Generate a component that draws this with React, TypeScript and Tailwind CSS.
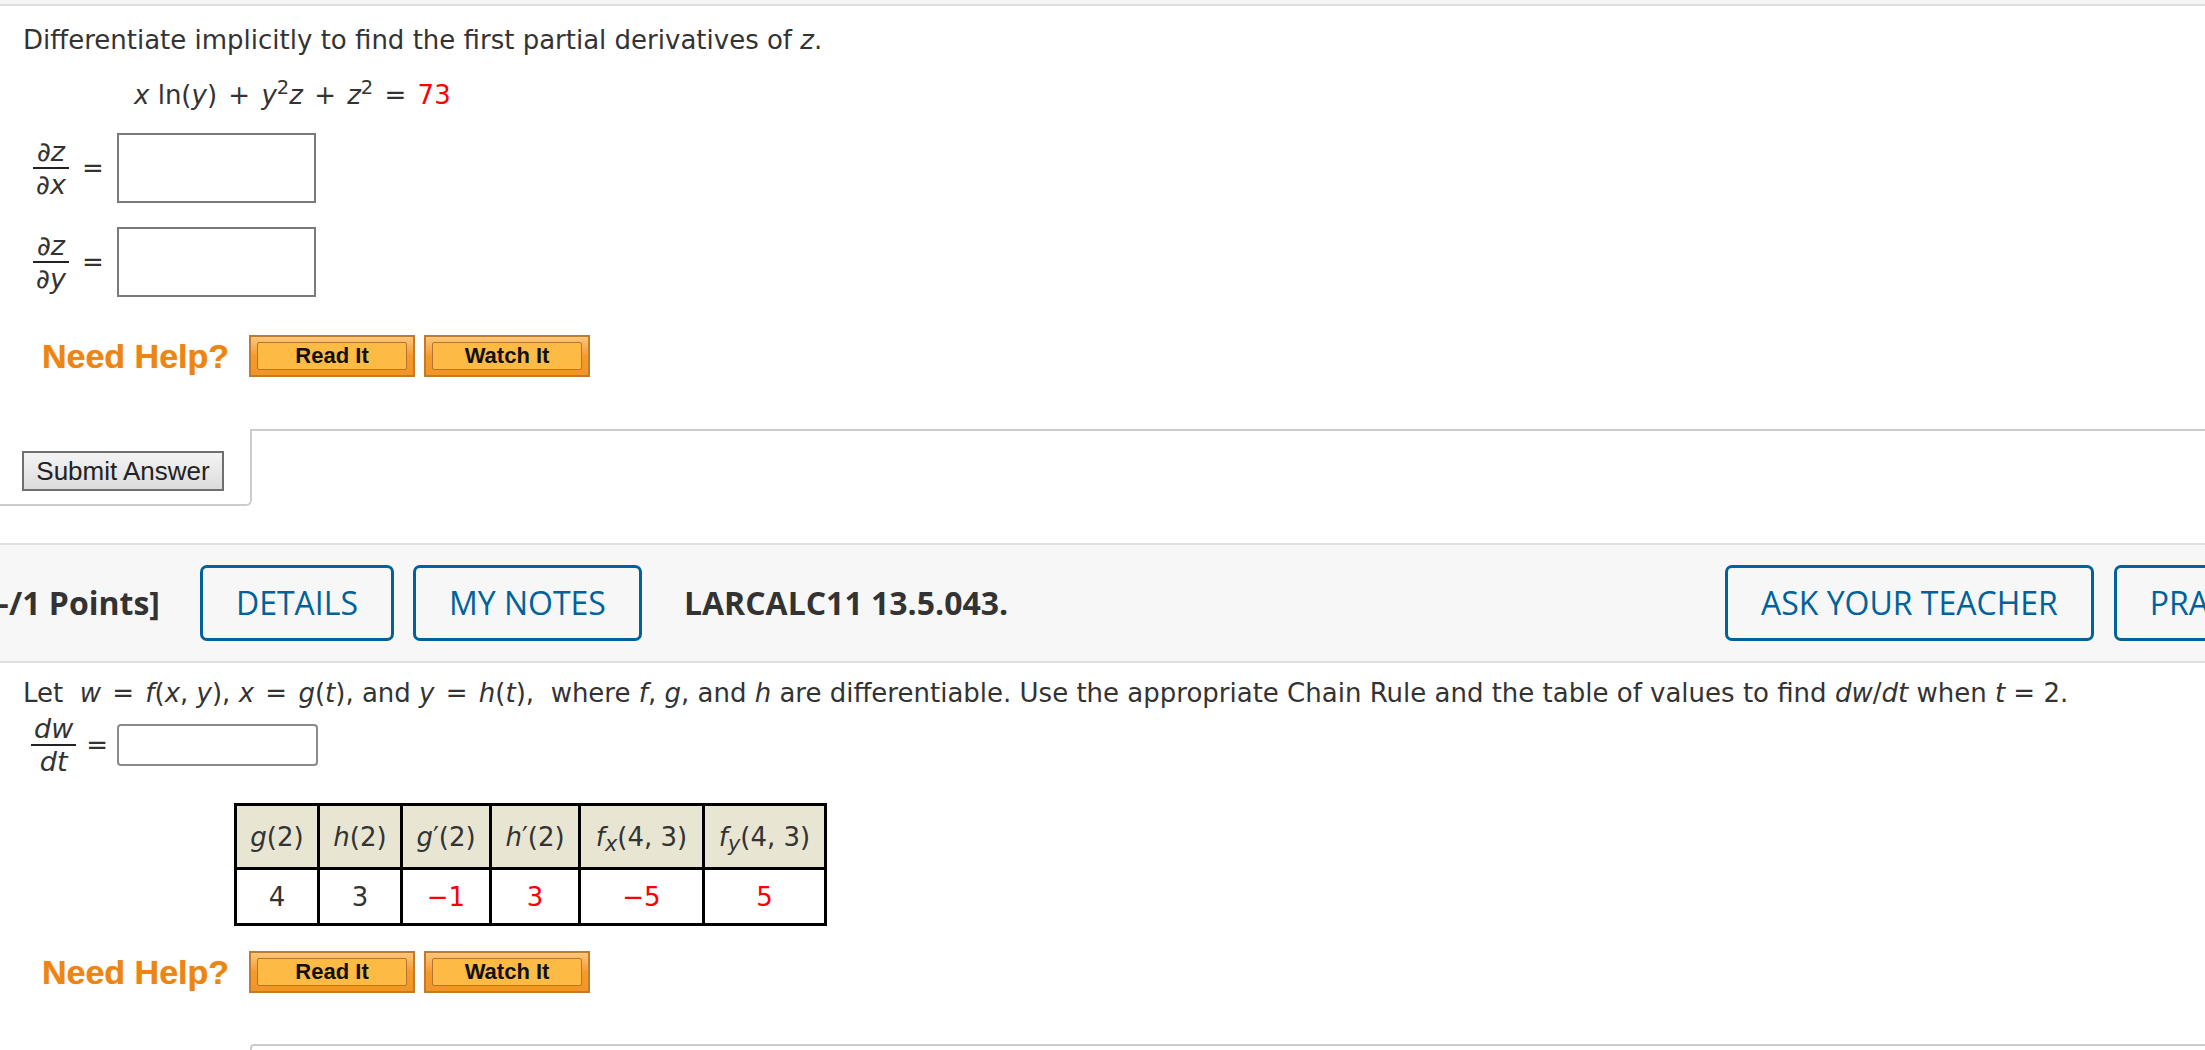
import type { ReactNode } from "react"

const red = "text-[#ff0000]"

function I({ children }: { children: ReactNode }) {
  return <i className="italic">{children}</i>
}

function Op({ children }: { children: ReactNode }) {
  return <span className="mx-[3px]">{children}</span>
}

// fraction like ∂z/∂x
function Frac({ num, den }: { num: ReactNode; den: ReactNode }) {
  return (
    <span className="inline-flex flex-col items-center text-[27px] leading-[1.15]">
      <span className="px-[3px]">{num}</span>
      <span className="h-[2px] w-full bg-[#222]" />
      <span className="px-[3px]">{den}</span>
    </span>
  )
}

function OrangeButton({ label }: { label: string }) {
  return (
    <div className="h-[42px] w-[166px] border-2 border-[#c27b2c] bg-gradient-to-b from-[#fbc77a] via-[#f59a2c] to-[#f39426] px-[6px] py-[5px]">
      <div className="flex h-full w-full items-center justify-center rounded-[2px] border border-[#b57531] bg-[#fdba45] font-['Liberation_Sans',Arial,sans-serif] text-[22px] font-bold text-[#111]">
        {label}
      </div>
    </div>
  )
}

function NeedHelp() {
  return (
    <div className="flex items-center pl-[42px]">
      <span className="font-['Liberation_Sans',Arial,sans-serif] text-[34px] font-bold text-[#ec8516] [text-shadow:0_0_1px_#f5b060]">
        Need Help?
      </span>
      <div className="ml-[20px]">
        <OrangeButton label="Read It" />
      </div>
      <div className="ml-[9px]">
        <OrangeButton label="Watch It" />
      </div>
    </div>
  )
}

function BlueButton({ label }: { label: string }) {
  return (
    <div className="flex h-[76px] shrink-0 items-center justify-center rounded-[7px] border-[3.5px] border-[#00629b] px-[33px] font-['Open_Sans',sans-serif] text-[32px] text-[#00629b]">
      {label}
    </div>
  )
}

const cols = [
  { w: "w-[83px]", head: <><I>g</I>(2)</>, val: "4", red: false },
  { w: "w-[83px]", head: <><I>h</I>(2)</>, val: "3", red: false },
  { w: "w-[89px]", head: <><I>g</I>′(2)</>, val: "−1", red: true },
  { w: "w-[89px]", head: <><I>h</I>′(2)</>, val: "3", red: true },
  { w: "w-[124px]", head: <><I>f</I><sub className="text-[0.8em] italic">x</sub>(4, 3)</>, val: "−5", red: true },
  { w: "w-[122px]", head: <><I>f</I><sub className="text-[0.8em] italic">y</sub>(4, 3)</>, val: "5", red: true },
]

export default function App() {
  return (
    <div className="h-[1050px] w-[2205px] overflow-hidden bg-white font-['DejaVu_Sans',Verdana,sans-serif] text-[26px] leading-[32px] text-[#333]">
      {/* top strip */}
      <div className="h-[6px] border-b-2 border-[#dedede] bg-[#f6f6f6]" />

      {/* question 1 */}
      <div className="mt-[18px] pl-[23px] whitespace-nowrap">
        Differentiate implicitly to find the first partial derivatives of <I>z</I>.
      </div>
      <div className="mt-[23px] pl-[134px] whitespace-nowrap">
        <I>x</I> ln(<I>y</I>) <Op>+</Op> <I>y</I>
        <sup className="text-[0.75em]">2</sup>
        <I>z</I> <Op>+</Op> <I>z</I>
        <sup className="text-[0.75em]">2</sup> <Op>=</Op> <span className={red}>73</span>
      </div>

      <div className="mt-[22px] flex items-center pl-[33px]">
        <Frac num={<>∂<I>z</I></>} den={<>∂<I>x</I></>} />
        <span className="ml-[13px]">=</span>
        <div className="ml-[13px] h-[70px] w-[199px] border-2 border-[#7a7a7a]" />
      </div>
      <div className="mt-[24px] flex items-center pl-[33px]">
        <Frac num={<>∂<I>z</I></>} den={<>∂<I>y</I></>} />
        <span className="ml-[13px]">=</span>
        <div className="ml-[13px] h-[70px] w-[199px] border-2 border-[#7a7a7a]" />
      </div>

      <div className="mt-[38px]">
        <NeedHelp />
      </div>

      {/* submit area */}
      <div className="mt-[52px] flex items-start">
        <div className="h-[77px] w-[252px] shrink-0 rounded-br-[6px] border-r-2 border-b-2 border-[#cccccc] pl-[22px] pt-[22px]">
          <div className="flex h-[40px] w-[202px] items-center justify-center border-2 border-[#6f6f6f] bg-gradient-to-b from-[#f4f4f4] to-[#dcdcdc] font-['Liberation_Sans',Arial,sans-serif] text-[26px] text-[#222]">
            Submit Answer
          </div>
        </div>
        <div className="h-[20px] flex-1 border-t-2 border-[#cccccc]" />
      </div>

      {/* question 2 header */}
      <div className="mt-[37px] flex h-[120px] items-center border-y-2 border-[#e0e0e0] bg-[#f7f7f7] whitespace-nowrap">
        <span className="-ml-[7px] font-['Open_Sans',sans-serif] text-[32px] font-bold text-[#333]">–/1 Points]</span>
        <div className="ml-[40px]">
          <BlueButton label="DETAILS" />
        </div>
        <div className="ml-[19px]">
          <BlueButton label="MY NOTES" />
        </div>
        <span className="ml-[42px] font-['Open_Sans',sans-serif] text-[32px] font-bold text-[#333]">LARCALC11 13.5.043.</span>
        <div className="ml-auto flex w-[480px] shrink-0">
          <BlueButton label="ASK YOUR TEACHER" />
          <div className="ml-[20px]">
            <BlueButton label="PRACTICE ANOTHER" />
          </div>
        </div>
      </div>

      {/* question 2 body */}
      <div className="mt-[14px] pl-[23px] whitespace-nowrap">
        Let{"\u00a0\u00a0"}<I>w</I> <Op>=</Op> <I>f</I>(<I>x</I>, <I>y</I>), <I>x</I> <Op>=</Op> <I>g</I>(<I>t</I>), and <I>y</I> <Op>=</Op>{" "}
        <I>h</I>(<I>t</I>),{"\u00a0\u00a0"}where <I>f</I>, <I>g</I>, and <I>h</I> are differentiable. Use the appropriate Chain Rule and the
        table of values to find <I>dw</I>/<I>dt</I> when <I>t</I> = 2.
      </div>
      <div className="mt-[4px] flex items-center pl-[31px]">
        <Frac num={<I>dw</I>} den={<I>dt</I>} />
        <span className="ml-[10px]">=</span>
        <div className="ml-[9px] h-[42px] w-[201px] rounded-[4px] border-2 border-[#8a8a8a]" />
      </div>

      <div className="mt-[26px] pl-[234px]">
        <table className="border-collapse border-[3px] border-black text-center">
          <thead>
            <tr className="h-[64px] bg-[#e8e6d3]">
              {cols.map((c, i) => (
                <th key={i} className={`border-[3px] border-black font-normal ${c.w}`}>
                  {c.head}
                </th>
              ))}
            </tr>
          </thead>
          <tbody>
            <tr className="h-[56px]">
              {cols.map((c, i) => (
                <td key={i} className={`border-[3px] border-black ${c.red ? red : ""}`}>
                  {c.val}
                </td>
              ))}
            </tr>
          </tbody>
        </table>
      </div>

      <div className="mt-[25px]">
        <NeedHelp />
      </div>

      <div className="ml-[250px] mt-[51px] h-[20px] rounded-tl-[4px] border-l-2 border-t-2 border-[#cccccc]" />
    </div>
  )
}
